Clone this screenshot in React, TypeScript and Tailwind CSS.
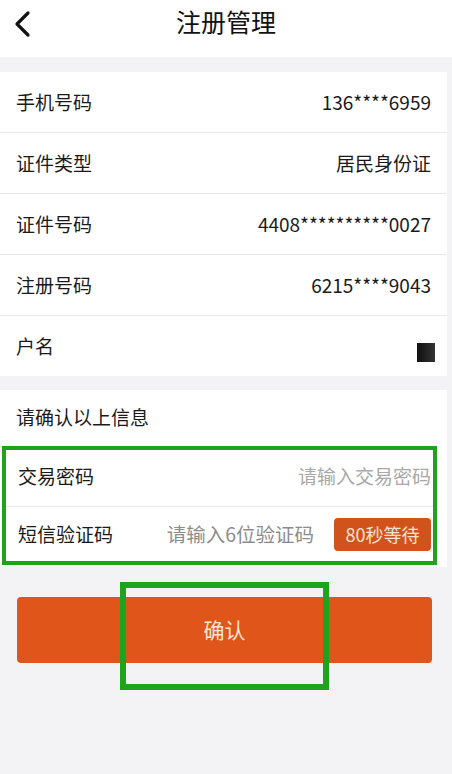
const font = { fontFamily: '"Noto Sans CJK SC", "Noto Sans", sans-serif' };

function InfoRow({ label, value }: { label: string; value: React.ReactNode }) {
  return (
    <div className="flex h-[61px] items-center justify-between border-b border-[#e8e8ea] px-4">
      <span className="text-[19px] text-[#1a1a1a]">{label}</span>
      <span className="text-[19px] text-[#1a1a1a]">{value}</span>
    </div>
  );
}

export default function App() {
  return (
    <div className="h-[774px] w-[452px] overflow-hidden bg-[#f3f3f5]" style={font}>
      <div className="relative flex h-[57px] items-center justify-center bg-white">
        <svg className="absolute left-[13px] top-[10px]" width="18" height="28" viewBox="0 0 18 28">
          <path d="M15 3 L4 14 L15 25" fill="none" stroke="#111" strokeWidth="3.2" strokeLinecap="round" strokeLinejoin="round" />
        </svg>
        <span className="-mt-[13px] text-[25px] text-[#111]">注册管理</span>
      </div>

      <div className="mt-[15px] w-[447px] bg-white">
        <InfoRow label="手机号码" value="136****6959" />
        <InfoRow label="证件类型" value="居民身份证" />
        <InfoRow label="证件号码" value="4408**********0027" />
        <InfoRow label="注册号码" value="6215****9043" />
        <div className="flex h-[60px] items-center justify-between px-4">
          <span className="text-[19px] text-[#1a1a1a]">户名</span>
          <span className="mr-[-4px] mt-[12px] h-[19px] w-[18px] bg-gradient-to-r from-[#111] to-[#333]" />
        </div>
      </div>

      <div className="mt-[14px] w-[447px] bg-white">
        <div className="flex h-[56px] items-center px-4">
          <span className="-mt-[2px] text-[19px] text-[#1a1a1a]">请确认以上信息</span>
        </div>
        <div className="ml-[2px] w-[435px] border-4 border-[#1ea31c]">
          <div className="flex h-[57px] items-center justify-between border-b border-[#e8e8ea] pl-3 pr-[2px]">
            <span className="-mt-[4px] text-[19px] text-[#1a1a1a]">交易密码</span>
            <span className="-mt-[4px] text-[19px] text-[#a8a8a8]">请输入交易密码</span>
          </div>
          <div className="flex h-[54px] items-center pl-3 pr-[2px]">
            <span className="text-[19px] text-[#1a1a1a]">短信验证码</span>
            <span className="ml-auto mr-[20px] text-[19.5px] text-[#8c8c8c]">请输入6位验证码</span>
            <span className="flex h-[33px] w-[97px] items-center justify-center rounded-[4px] bg-[#d0531c] text-[18px] text-[#fbe3d2]">
              80秒等待
            </span>
          </div>
        </div>
        <div className="h-[2px]" />
      </div>

      <div className="relative mt-[30px] px-[17px]">
        <div className="flex h-[66px] w-[415px] items-center justify-center rounded-[4px] bg-[#e0561a] text-[21px] text-[#fde6d6]">
          确认
        </div>
        <div className="absolute left-[120px] top-[-15px] h-[108px] w-[209px] border-[6px] border-[#1ea31c]" />
      </div>
    </div>
  );
}
